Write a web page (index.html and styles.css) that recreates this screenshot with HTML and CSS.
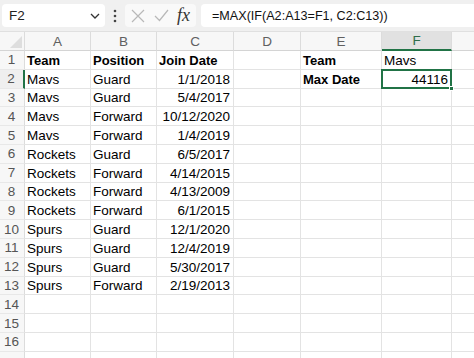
FILE: index.html
```html
<!DOCTYPE html>
<html>
<head>
<meta charset="utf-8">
<link rel="stylesheet" href="styles.css">
</head>
<body>
<div class="fbar">
  <div class="namebox"><span class="nb-text">F2</span>
    <svg class="chev" width="10" height="6" viewBox="0 0 10 6"><path d="M1 1 L5 5 L9 1" fill="none" stroke="#333" stroke-width="1.3"/></svg>
  </div>
  <div class="dots">
    <svg width="4" height="14" viewBox="0 0 4 14"><circle cx="2" cy="2" r="1.3" fill="#444"/><circle cx="2" cy="7" r="1.3" fill="#444"/><circle cx="2" cy="12" r="1.3" fill="#444"/></svg>
  </div>
  <div class="iconbox">
    <svg width="14" height="14" viewBox="0 0 14 14"><path d="M1 1 L13 13 M13 1 L1 13" stroke="#b8b8b8" stroke-width="1.2" fill="none"/></svg>
    <svg width="15" height="13" viewBox="0 0 15 13"><path d="M1 7 L5.5 11.5 L14 1" stroke="#b8b8b8" stroke-width="1.2" fill="none"/></svg>
    <span class="fx">fx</span>
  </div>
  <div class="formula">=MAX(IF(A2:A13=F1, C2:C13))</div>
</div>
<div class="sheet">
  <div class="hd corner"></div>
  <div class="hd col">A</div><div class="hd col">B</div><div class="hd col">C</div><div class="hd col">D</div><div class="hd col">E</div><div class="hd col sel">F</div><div class="hd col"></div>

  <div class="rh">1</div><div class="c b">Team</div><div class="c b">Position</div><div class="c b">Join Date</div><div class="c"></div><div class="c b">Team</div><div class="c">Mavs</div><div class="c"></div>
  <div class="rh rsel">2</div><div class="c">Mavs</div><div class="c">Guard</div><div class="c r">1/1/2018</div><div class="c"></div><div class="c b">Max Date</div><div class="c r active">44116</div><div class="c"></div>
  <div class="rh">3</div><div class="c">Mavs</div><div class="c">Guard</div><div class="c r">5/4/2017</div><div class="c"></div><div class="c"></div><div class="c"></div><div class="c"></div>
  <div class="rh">4</div><div class="c">Mavs</div><div class="c">Forward</div><div class="c r">10/12/2020</div><div class="c"></div><div class="c"></div><div class="c"></div><div class="c"></div>
  <div class="rh">5</div><div class="c">Mavs</div><div class="c">Forward</div><div class="c r">1/4/2019</div><div class="c"></div><div class="c"></div><div class="c"></div><div class="c"></div>
  <div class="rh">6</div><div class="c">Rockets</div><div class="c">Guard</div><div class="c r">6/5/2017</div><div class="c"></div><div class="c"></div><div class="c"></div><div class="c"></div>
  <div class="rh">7</div><div class="c">Rockets</div><div class="c">Forward</div><div class="c r">4/14/2015</div><div class="c"></div><div class="c"></div><div class="c"></div><div class="c"></div>
  <div class="rh">8</div><div class="c">Rockets</div><div class="c">Forward</div><div class="c r">4/13/2009</div><div class="c"></div><div class="c"></div><div class="c"></div><div class="c"></div>
  <div class="rh">9</div><div class="c">Rockets</div><div class="c">Forward</div><div class="c r">6/1/2015</div><div class="c"></div><div class="c"></div><div class="c"></div><div class="c"></div>
  <div class="rh">10</div><div class="c">Spurs</div><div class="c">Guard</div><div class="c r">12/1/2020</div><div class="c"></div><div class="c"></div><div class="c"></div><div class="c"></div>
  <div class="rh">11</div><div class="c">Spurs</div><div class="c">Guard</div><div class="c r">12/4/2019</div><div class="c"></div><div class="c"></div><div class="c"></div><div class="c"></div>
  <div class="rh">12</div><div class="c">Spurs</div><div class="c">Guard</div><div class="c r">5/30/2017</div><div class="c"></div><div class="c"></div><div class="c"></div><div class="c"></div>
  <div class="rh">13</div><div class="c">Spurs</div><div class="c">Forward</div><div class="c r">2/19/2013</div><div class="c"></div><div class="c"></div><div class="c"></div><div class="c"></div>
  <div class="rh">14</div><div class="c"></div><div class="c"></div><div class="c"></div><div class="c"></div><div class="c"></div><div class="c"></div><div class="c"></div>
  <div class="rh">15</div><div class="c"></div><div class="c"></div><div class="c"></div><div class="c"></div><div class="c"></div><div class="c"></div><div class="c"></div>
  <div class="rh">16</div><div class="c"></div><div class="c"></div><div class="c"></div><div class="c"></div><div class="c"></div><div class="c"></div><div class="c"></div>
  <div class="rh"></div><div class="c"></div><div class="c"></div><div class="c"></div><div class="c"></div><div class="c"></div><div class="c"></div><div class="c"></div>
</div>
</body>
</html>
```
FILE: styles.css
```css
html, body {
  margin: 0;
  padding: 0;
  background: #ffffff;
  overflow: hidden;
  width: 474px;
  height: 358px;
}
body {
  font-family: "Liberation Sans", Arial, sans-serif;
  color: #000;
}
.fbar {
  height: 32px;
  background: #f0f0f0;
  display: flex;
  align-items: center;
  box-sizing: border-box;
  border-bottom: 1px solid #e0e0e0;
}
.namebox {
  margin-left: 2px;
  width: 103px;
  height: 23px;
  background: #ffffff;
  border-radius: 4px;
  display: flex;
  align-items: center;
  justify-content: space-between;
  box-sizing: border-box;
  padding: 0 5px 0 7px;
  font-size: 13.5px;
  color: #222;
}
.chev { display: block; }
.dots {
  width: 20px;
  display: flex;
  justify-content: center;
  align-items: center;
}
.dots svg { display: block; }
.iconbox {
  width: 71px;
  height: 23px;
  background: #f9f9f9;
  border-radius: 4px;
  display: flex;
  align-items: center;
  box-sizing: border-box;
  padding-left: 6px;
  gap: 9px;
}
.iconbox svg { display: block; }
.fx {
  font-family: "Liberation Serif", "Times New Roman", serif;
  font-style: italic;
  font-size: 18px;
  color: #333;
  margin-left: -1px;
}
.formula {
  margin-left: 5px;
  flex: 1;
  height: 23px;
  background: #ffffff;
  border-radius: 4px 0 0 4px;
  display: flex;
  align-items: center;
  padding-left: 11px;
  font-size: 12.6px;
  color: #111;
  white-space: nowrap;
}
.sheet {
  display: grid;
  grid-template-columns: 25px 66px 66px 77px 67px 81px 70px 30px;
  grid-template-rows: 19px repeat(17, 18.8px);
}
.hd {
  background: #f7f7f7;
  border-right: 1px solid #dcdcdc;
  border-bottom: 1px solid #d4d4d4;
  box-sizing: border-box;
  display: flex;
  align-items: center;
  justify-content: center;
  font-size: 13.5px;
  color: #606060;
}
.corner {
  position: relative;
}
.corner::after {
  content: "";
  position: absolute;
  right: 2px;
  bottom: 2px;
  width: 0;
  height: 0;
  border-left: 12px solid transparent;
  border-bottom: 12px solid #dedede;
}
.hd.sel {
  background: #e1e1e1;
  color: #2e6e4b;
  border-bottom: 2px solid #217346;
}
.rh {
  background: #f7f7f7;
  border-right: 1px solid #dcdcdc;
  border-bottom: 1px solid #e8e8e8;
  box-sizing: border-box;
  display: flex;
  align-items: center;
  justify-content: center;
  font-size: 13.5px;
  color: #555;
  padding-right: 1px;
}
.rh.rsel {
  border-right: 2px solid #217346;
  background: #efefef;
}
.c {
  border-right: 1px solid #e3e3e3;
  border-bottom: 1px solid #e3e3e3;
  box-sizing: border-box;
  display: flex;
  align-items: center;
  padding: 1px 3px 0 2px;
  font-size: 13.5px;
  white-space: nowrap;
  overflow: hidden;
}
.c.b {
  font-weight: bold;
  font-size: 13px;
}
.c.r { justify-content: flex-end; }
.c.active {
  position: relative;
  overflow: visible;
}
.c.active::after {
  content: "";
  position: absolute;
  left: -1px;
  top: -1px;
  right: -1px;
  bottom: -1px;
  border: 2px solid #217346;
  pointer-events: none;
}
.c.active::before {
  content: "";
  position: absolute;
  right: -3px;
  bottom: -3px;
  width: 5px;
  height: 5px;
  background: #217346;
  border: 1px solid #fff;
  box-sizing: border-box;
  z-index: 2;
}
```
